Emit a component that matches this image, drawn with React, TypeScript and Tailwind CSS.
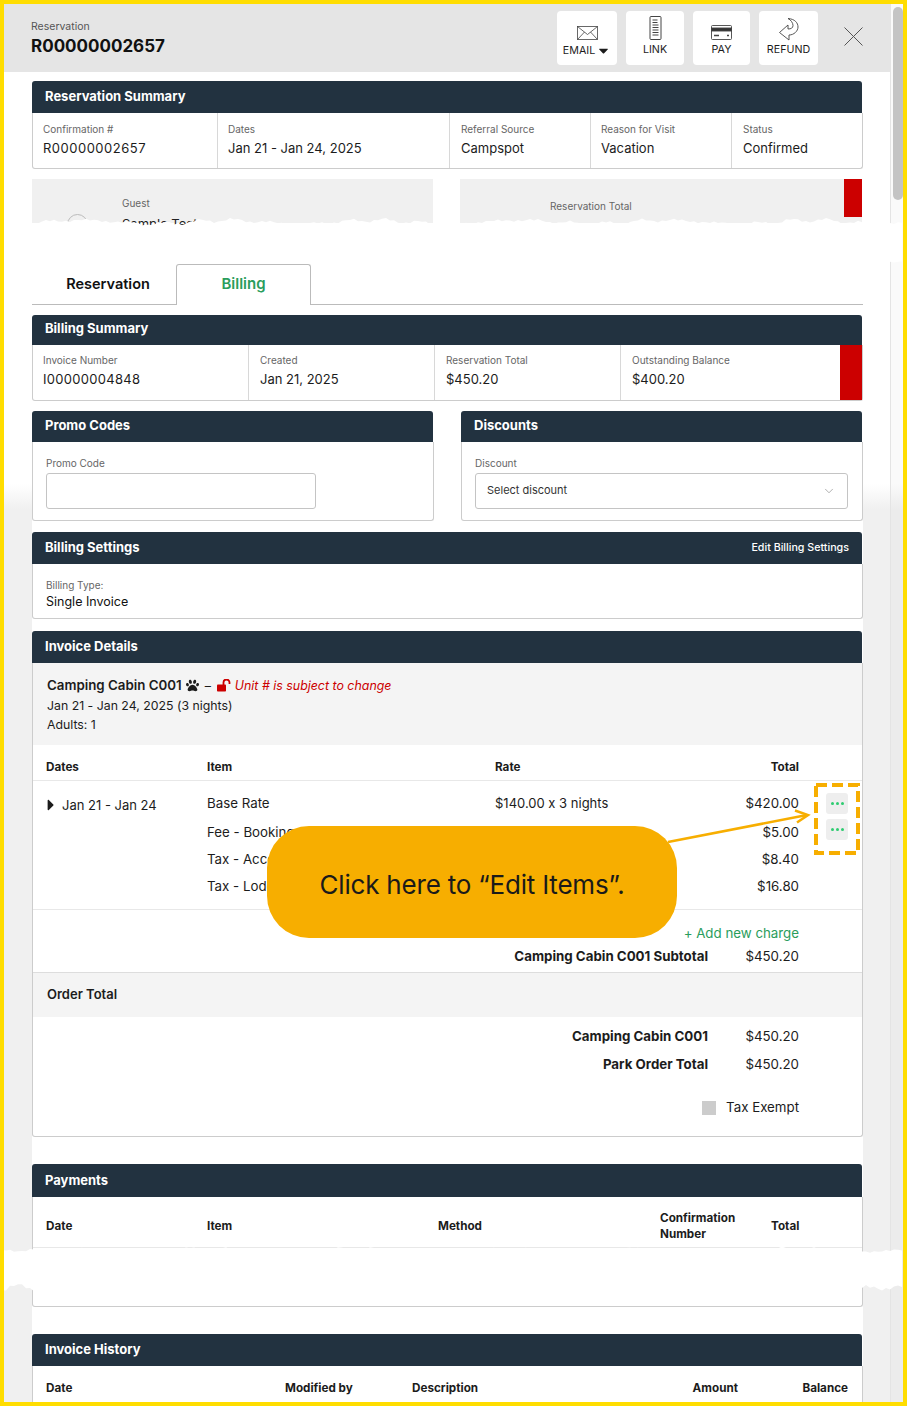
import * as React from 'react';
import { FaCaretDown, FaCaretRight, FaPaw } from 'react-icons/fa';
import { ChevronDown } from 'lucide-react';

// jagged edge for the torn-paper bands
const tear = (base: number, amp: number, seed: number, width = 902, step = 4) => {
  const pts: string[] = [];
  for (let x = 0; x <= width; x += step) {
    const n =
      Math.sin(x * 0.043 + seed) +
      0.7 * Math.sin(x * 0.17 + seed * 2) +
      0.5 * Math.sin(x * 0.61 + seed * 3) +
      0.35 * Math.sin(x * 1.37 + seed * 5);
    pts.push(`${x},${(base + n * amp).toFixed(1)}`);
  }
  return pts;
};

const TornBand: React.FC<{ className: string; height: number; top: number; bottom: number; amp: number; ampB: number; seed: number }> = ({
  className, height, top, bottom, amp, ampB, seed,
}) => {
  const upper = tear(top, amp, seed);
  const lower = tear(bottom, ampB, seed + 2).reverse();
  return (
    <svg className={className} width="902" height={height} viewBox={`0 0 902 ${height}`}>
      <polygon points={[...upper, ...lower].join(' ')} fill="#fff" />
    </svg>
  );
};

const Bar: React.FC<{ title: string; className?: string; children?: React.ReactNode }> = ({ title, className = '', children }) => (
  <div className={`mr-[1px] flex items-center justify-between rounded-t-[3px] bg-[#223240] pl-[13px] pr-[13px] text-white ${className}`}>
    <span className="text-[13px] font-bold">{title}</span>
    {children}
  </div>
);

const Field: React.FC<{ label: string; value: string; className?: string; valueClass?: string }> = ({ label, value, className = '', valueClass = '' }) => (
  <div className={className}>
    <div className="text-[10px] leading-[12px] text-[#666]">{label}</div>
    <div className={`mt-[4px] text-[13px] leading-[18px] text-[#1c1c1c] ${valueClass}`}>{value}</div>
  </div>
);

const ToolButton: React.FC<{ label: React.ReactNode; className: string; children: React.ReactNode }> = ({ label, className, children }) => (
  <div className={`flex h-[54px] flex-col items-center rounded-[4px] bg-white ${className}`}>
    <div className="flex h-[32px] items-end pb-[3px]">{children}</div>
    <div className="flex items-center text-[10.700px] leading-[14px] text-[#1c1c1c]">{label}</div>
  </div>
);

const Th: React.FC<{ className?: string; children: React.ReactNode }> = ({ className = '', children }) => (
  <div className={`text-[11.700px] font-bold text-[#1c1c1c] ${className}`}>{children}</div>
);

const LineRow: React.FC<{ item: string; rate?: string; total: string; className: string }> = ({ item, rate, total, className }) => (
  <div className={`grid grid-cols-[288px_1fr_auto] items-center text-[13.300px] text-[#1c1c1c] ${className}`}>
    <span>{item}</span>
    <span className="text-[13px]">{rate}</span>
    <span>{total}</span>
  </div>
);

const TotalRow: React.FC<{ label: string; value: string; className: string }> = ({ label, value, className }) => (
  <div className={`flex items-center justify-end pr-[63px] text-[13.300px] text-[#1c1c1c] ${className}`}>
    <span className="font-bold">{label}</span>
    <span className="w-[91px] text-right">{value}</span>
  </div>
);

const Dots: React.FC<{ className?: string }> = ({ className = '' }) => (
  <div className={`flex h-[21px] w-[22px] items-center justify-center gap-[2px] rounded-[3px] bg-[#eeeeee] ${className}`}>
    <i className="block h-[3px] w-[3px] rounded-full bg-[#2ecc71]" />
    <i className="block h-[3px] w-[3px] rounded-full bg-[#2ecc71]" />
    <i className="block h-[3px] w-[3px] rounded-full bg-[#2ecc71]" />
  </div>
);

export default function App() {
  return (
    <div className="relative flex h-[1406px] w-[907px] overflow-hidden border-4 border-[#ffdd00] bg-white font-['Inter',sans-serif] [font-feature-settings:'calt'_0]">
      {/* main column */}
      <div className="w-[886px] shrink-0 bg-[linear-gradient(to_bottom,#fff_0,#fff_480px,#f0f0f0_505px)]">
        <header className="flex h-[68px] items-start bg-[#e5e5e5] pl-[27px]">
          <div className="w-[526px] pt-[16px]">
            <div className="text-[10.500px] leading-[13px] text-[#555]">Reservation</div>
            <div className="mt-[2px] text-[17px] font-bold leading-[22px] text-[#111]">R00000002657</div>
          </div>
          <div className="mt-[7px] flex gap-[9px]">
            <ToolButton className="w-[60px]" label={<>EMAIL<FaCaretDown className="ml-[1px] text-[15px]" /></>}>
              <svg width="21" height="14" viewBox="0 0 21 14" fill="none" stroke="#444" strokeWidth="0.8">
                <rect x="0.500" y="0.500" width="20" height="13" />
                <path d="M0.500 0.500 10.500 8.500 20.500 0.500M0.500 13.500 7.500 6M20.500 13.500 13.500 6" />
              </svg>
            </ToolButton>
            <ToolButton className="w-[58px]" label="LINK">
              <svg width="13" height="24" viewBox="0 0 13 24" fill="none" stroke="#444" strokeWidth="1">
                <rect x="1" y="0.500" width="11" height="23" rx="1" />
                <path d="M3.500 4h5M3.500 6.500h5M3.500 9h6M3.500 11.500h6M3.500 14h6M3.500 16.500h6M3.500 19h6" />
              </svg>
            </ToolButton>
            <ToolButton className="w-[57px]" label="PAY">
              <svg width="21" height="15" viewBox="0 0 21 15" fill="none" stroke="#444" strokeWidth="0.9">
                <rect x="0.500" y="0.500" width="20" height="14" rx="1" />
                <rect x="0.500" y="3" width="20" height="3" fill="#333" />
                <path d="M3 10.500h5M16 10.500h2" strokeWidth="1.300" />
              </svg>
            </ToolButton>
            <ToolButton className="w-[59px]" label="REFUND">
              <svg className="mb-[-1px]" width="20" height="23" viewBox="0 0 20 23" fill="none" stroke="#444" strokeWidth="0.9" strokeLinejoin="round">
                <path d="M9 0.500C16 1 19 5 19 9c0 4-4 8-9 8v5L0.500 14.500 9 7v4c3 0 5-1 5-3.500C14 5 12 2 9 0.500Z" />
              </svg>
            </ToolButton>
          </div>
          <svg className="ml-[26px] mt-[23px]" width="19" height="19" viewBox="0 0 19 19" stroke="#555" strokeWidth="1" fill="none">
            <path d="M0.500 0.500 18.500 18.500M18.500 0.500 0.500 18.500" />
          </svg>
        </header>

        <main className="ml-[28px] mr-[27px] bg-white pt-[9px]">
          {/* reservation summary */}
          <Bar title="Reservation Summary" className="h-[32px]" />
          <div className="flex h-[56px] rounded-b-[3px] border-x border-b border-[#cccccc]">
            <Field label="Confirmation #" value="R00000002657" valueClass="tracking-[0.5px]" className="w-[185px] border-r border-[#d8d8d8] pl-[10px] pt-[10px]" />
            <Field label="Dates" value="Jan 21 - Jan 24, 2025" className="w-[232px] border-r border-[#d8d8d8] pl-[10px] pt-[10px]" />
            <Field label="Referral Source" value="Campspot" className="w-[141px] border-r border-[#d8d8d8] pl-[11px] pt-[10px]" />
            <Field label="Reason for Visit" value="Vacation" className="w-[141px] border-r border-[#d8d8d8] pl-[10px] pt-[10px]" />
            <Field label="Status" value="Confirmed" className="flex-1 pl-[11px] pt-[10px]" />
          </div>

          <div className="mt-[10px] flex h-[44px] justify-between">
            <div className="h-[44px] w-[401px] bg-[#f0f0f0] pl-[90px] pt-[17px] text-[10px] text-[#666]">
              <div>Guest</div>
              <div className="mt-[3px] flex items-center">
                <span className="-ml-[55px] mr-[34px] block h-[21px] w-[21px] shrink-0 rounded-full border border-[#bbb]" />
                <span className="text-[13px] text-[#222]">Sample Tester</span>
              </div>
            </div>
            <div className="mr-[1px] flex h-[44px] w-[402px] justify-between bg-[#f0f0f0] text-[10px] text-[#666]">
              <div className="pl-[90px] pt-[20px]">Reservation Total</div>
              <div className="h-[38px] w-[18px] bg-[#cc0000]" />
            </div>
          </div>

          {/* tabs */}
          <div className="mt-[41px] flex h-[41px] border-b border-[#bbbbbb]">
            <div className="flex w-[144px] items-center justify-center pl-[8px] pb-[1px] text-[14.500px] font-semibold text-[#111]">Reservation</div>
            <div className="h-[41px] w-[135px] rounded-t-[3px] border-x border-t border-[#bbbbbb] bg-white pt-[8px] text-center text-[15px] font-semibold text-[#2a9d5c]">Billing</div>
          </div>

          {/* billing summary */}
          <Bar title="Billing Summary" className="mt-[10px] h-[30px] pb-[2px]" />
          <div className="flex h-[56px] rounded-b-[3px] border-x border-b border-[#cccccc]">
            <Field label="Invoice Number" value="I00000004848" valueClass="tracking-[0.3px]" className="w-[216px] border-r border-[#d8d8d8] pl-[10px] pt-[9px]" />
            <Field label="Created" value="Jan 21, 2025" className="w-[186px] border-r border-[#d8d8d8] pl-[11px] pt-[9px]" />
            <Field label="Reservation Total" value="$450.20" className="w-[186px] border-r border-[#d8d8d8] pl-[11px] pt-[9px]" />
            <Field label="Outstanding Balance" value="$400.20" className="flex-1 pl-[11px] pt-[9px]" />
            <div className="w-[22px] bg-[#cc0000]" />
          </div>

          {/* promo + discounts */}
          <div className="mt-[10px] flex justify-between">
            <div className="w-[402px]">
              <Bar title="Promo Codes" className="h-[31px] pb-[1px]" />
              <div className="h-[79px] rounded-b-[3px] border-x border-b border-[#cccccc] px-[13px] pt-[15px]">
                <div className="text-[10px] leading-[13px] text-[#666]">Promo Code</div>
                <div className="mt-[3px] h-[36px] w-[270px] rounded-[3px] border border-[#c4c4c4]" />
              </div>
            </div>
            <div className="w-[402px]">
              <Bar title="Discounts" className="h-[31px] pb-[1px]" />
              <div className="h-[79px] rounded-b-[3px] border-x border-b border-[#cccccc] pl-[13px] pr-[14px] pt-[15px]">
                <div className="text-[10px] leading-[13px] text-[#666]">Discount</div>
                <div className="mt-[3px] flex h-[36px] items-center justify-between rounded-[3px] border border-[#c4c4c4] px-[11px] pb-[1px] text-[11px] text-[#333]">
                  Select discount
                  <ChevronDown size={14} strokeWidth={1} className="text-[#777]" />
                </div>
              </div>
            </div>
          </div>

          {/* billing settings */}
          <Bar title="Billing Settings" className="mt-[11px] h-[32px]">
            <span className="text-[10.700px] font-medium">Edit Billing Settings</span>
          </Bar>
          <div className="h-[55px] rounded-b-[3px] border-x border-b border-[#cccccc] px-[13px] pt-[15px]">
            <div className="text-[10px] leading-[13px] text-[#666]">Billing Type:</div>
            <div className="mt-[1px] text-[12.500px] leading-[17px] text-[#111]">Single Invoice</div>
          </div>

          {/* invoice details */}
          <Bar title="Invoice Details" className="mt-[12px] h-[32px]" />
          <div className="h-[474px] rounded-b-[3px] border-x border-b border-[#cccccc]">
            <div className="h-[82px] bg-[#f4f4f4] pl-[14px] pt-[13px] text-[12.300px] leading-[19.500px] text-[#1c1c1c]">
              <div className="flex items-center">
                <span className="text-[13.300px] font-semibold">Camping Cabin C001</span>
                <FaPaw className="ml-[4px] text-[13px]" />
                <span className="ml-[6px] mr-[6px]">–</span>
                <svg className="mr-[4px]" width="14" height="13" viewBox="0 0 14 13" fill="#cc0000">
                  <rect x="0" y="5.500" width="9" height="7" rx="0.800" />
                  <path d="M6.500 6V3.500a3 3 0 0 1 6 0V5" fill="none" stroke="#cc0000" strokeWidth="1.800" />
                </svg>
                <span className="text-[12.400px] italic text-[#cc0000]">Unit # is subject to change</span>
              </div>
              <div>Jan 21 - Jan 24, 2025 (3 nights)</div>
              <div>Adults: 1</div>
            </div>
            <div className="grid h-[36px] grid-cols-[161px_288px_1fr_auto] items-center border-b border-[#e8e8e8] pl-[13px] pr-[63px] pt-[11px]">
              <Th>Dates</Th>
              <Th>Item</Th>
              <Th>Rate</Th>
              <Th>Total</Th>
            </div>
            <div className="flex h-[129px] border-b border-[#e8e8e8] pl-[13px] pr-[63px] pt-[9px]">
              <div className="flex w-[161px] items-start pt-[6px] text-[13px] text-[#1c1c1c]">
                <FaCaretRight className="-ml-[4px] mr-[2px] text-[18px]" />
                Jan 21 - Jan 24
              </div>
              <div className="flex-1">
                <LineRow className="h-[28px]" item="Base Rate" rate="$140.00 x 3 nights" total="$420.00" />
                <LineRow className="h-[29px]" item="Fee - Booking" total="$5.00" />
                <LineRow className="h-[26px]" item="Tax - Accommodation" total="$8.40" />
                <LineRow className="h-[28px]" item="Tax - Lodging" total="$16.80" />
              </div>
            </div>
            <div className="h-[63px] border-b border-[#dddddd]">
              <div className="pr-[63px] pt-[13px] text-right text-[13.300px] leading-[20px] text-[#2a9d5c]">+ Add new charge</div>
              <TotalRow className="mt-[3px] h-[22px]" label="Camping Cabin C001 Subtotal" value="$450.20" />
            </div>
            <div className="flex h-[44px] items-center bg-[#f4f4f4] pl-[14px] text-[13px] font-semibold text-[#1c1c1c]">Order Total</div>
            <TotalRow className="mt-[9px] h-[22px]" label="Camping Cabin C001" value="$450.20" />
            <TotalRow className="mt-[6px] h-[22px]" label="Park Order Total" value="$450.20" />
            <div className="mt-[22px] flex items-center justify-end pr-[63px] text-[13.300px] text-[#1c1c1c]">
              <span className="mr-[10px] block h-[14px] w-[14px] bg-[#cccccc]" />
              Tax Exempt
            </div>
          </div>

          {/* payments */}
          <Bar title="Payments" className="mt-[27px] h-[33px]" />
          <div className="h-[110px] rounded-b-[3px] border-x border-b border-[#cccccc]">
            <div className="grid h-[51px] grid-cols-[161px_231px_222px_111px_auto] items-center border-b border-[#e8e8e8] pl-[13px] pt-[7px] leading-[16px]">
              <Th>Date</Th>
              <Th>Item</Th>
              <Th>Method</Th>
              <Th>Confirmation<br />Number</Th>
              <Th>Total</Th>
            </div>
          </div>

          {/* invoice history */}
          <Bar title="Invoice History" className="mt-[27px] h-[32px]" />
          <div className="h-[60px] border-x border-[#cccccc]">
            <div className="grid h-[44px] grid-cols-[239px_127px_1fr_auto_110px] items-center pl-[13px] pr-[14px] pt-[2px]">
              <Th>Date</Th>
              <Th>Modified by</Th>
              <Th>Description</Th>
              <Th>Amount</Th>
              <Th className="text-right">Balance</Th>
            </div>
          </div>
        </main>
      </div>

      {/* scrollbar */}
      <div className="flex-1 border-l border-[#e4e4e4] bg-[linear-gradient(to_bottom,#fafafa_0,#fafafa_480px,#ececec_505px)] pl-[2px] pt-[3px]">
        <div className="h-[193px] w-[10px] rounded-full bg-[#c4c4c4]" />
      </div>

      {/* torn paper bands, callout and highlight sit over the page */}
      <TornBand className="absolute left-[-2px] top-[206px]" height={60} top={12} bottom={52} amp={1.800} ampB={0.6} seed={1.3} />
      <TornBand className="absolute left-[-2px] top-[1238px]" height={60} top={8} bottom={48} amp={1.400} ampB={2.800} seed={2.100} />

      <div className="absolute left-[263px] top-[822px] flex h-[112px] w-[410px] items-center justify-center rounded-[42px] bg-[#f7ae00] pt-[5px] text-[26px] tracking-[-0.2px] text-[#1a1a1a]">
        Click here to “Edit Items”.
      </div>
      <svg className="absolute left-[660px] top-[800px]" width="150" height="50" viewBox="0 0 150 50" fill="none" stroke="#f7ae00" strokeWidth="2.500">
        <path d="M4 38 143 11" />
        <path d="M131 6.500 144 11 133 18.500" />
      </svg>
      <div className="absolute left-[810px] top-[779px] flex h-[72px] w-[46px] flex-col items-center pt-[10px]">
        <svg className="absolute inset-0" width="46" height="72" viewBox="0 0 46 72" fill="none">
          <rect x="2" y="2" width="42" height="68" stroke="#f7ae00" strokeWidth="4" strokeDasharray="11 5" />
        </svg>
        <Dots />
        <Dots className="mt-[5px]" />
      </div>
    </div>
  );
}
